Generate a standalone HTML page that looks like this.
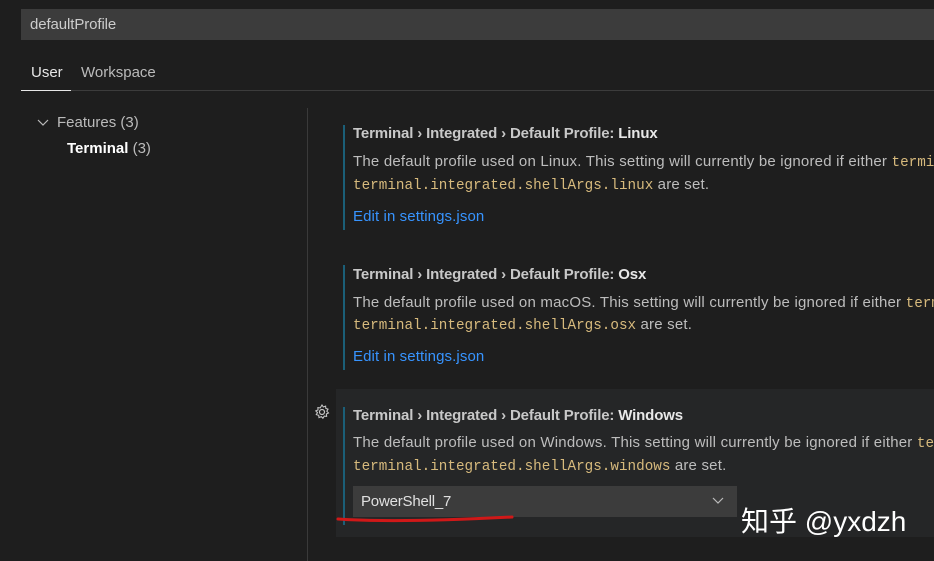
<!DOCTYPE html>
<html><head><meta charset="utf-8"><style>
*{margin:0;padding:0;box-sizing:border-box}
body{width:934px;height:561px;background:#1e1e1e;font-family:"Liberation Sans",sans-serif;color:#cccccc;position:relative;overflow:hidden}
.abs{position:absolute;white-space:nowrap}
.search{left:21px;top:9px;width:913px;height:31px;background:#3c3c3c;font-size:15px;color:#cccccc;padding:7px 9px;letter-spacing:-0.1px}
.tab{font-size:15px;top:64px;letter-spacing:0}
.item{position:absolute;left:336px;width:598px;overflow:hidden}
.bar{position:absolute;left:7px;width:2px;background:#1b5f78}
.t{position:absolute;left:17px;font-size:15px;font-weight:bold;color:#c8c8c8;letter-spacing:-0.15px;white-space:nowrap}
.t b{color:#e8e8e8}
.d{position:absolute;left:17px;font-size:15px;color:#bdbdbd;letter-spacing:0.2px;white-space:nowrap}
.m{font-family:"Liberation Mono",monospace;font-size:14.3px;color:#d7ba7d;letter-spacing:0}
.l{position:absolute;left:17px;font-size:15px;color:#3794ff;letter-spacing:0.1px}
</style></head><body>
<div class="abs search">defaultProfile</div>
<div class="abs tab" style="left:31px;color:#e7e7e7">User</div>
<div class="abs tab" style="left:81px;color:#bbbbbb">Workspace</div>
<div class="abs" style="left:21px;top:90px;width:50px;height:1px;background:#e7e7e7"></div>
<div class="abs" style="left:71px;top:90px;width:863px;height:1px;background:#3c3c3c"></div>
<svg class="abs" style="left:37px;top:118px" width="12" height="10"><path d="M1 2 L6 7 L11 2" stroke="#bbb" stroke-width="1.2" fill="none"/></svg>
<div class="abs" style="left:57px;top:114px;font-size:15px;color:#bbbbbb;letter-spacing:0">Features (3)</div>
<div class="abs" style="left:67px;top:140px;font-size:15px;color:#bbbbbb;letter-spacing:0"><b style="color:#ffffff">Terminal</b> (3)</div>
<div class="abs" style="left:307px;top:108px;width:1px;height:453px;background:#3a3a3a"></div>

<div class="item" style="top:118px;height:120px">
 <div class="bar" style="top:7px;height:105px"></div>
 <div class="t" style="top:7px">Terminal › Integrated › Default Profile: <b>Linux</b></div>
 <div class="d" style="top:35px">The default profile used on Linux. This setting will currently be ignored if either <span class="m">terminal.integrated.shell.linux</span></div>
 <div class="d" style="top:58px"><span class="m">terminal.integrated.shellArgs.linux</span> are set.</div>
 <div class="l" style="top:90px">Edit in settings.json</div>
</div>
<div class="item" style="top:258px;height:120px">
 <div class="bar" style="top:7px;height:105px"></div>
 <div class="t" style="top:8px">Terminal › Integrated › Default Profile: <b>Osx</b></div>
 <div class="d" style="top:36px">The default profile used on macOS. This setting will currently be ignored if either <span class="m">terminal.integrated.shell.osx</span></div>
 <div class="d" style="top:58px"><span class="m">terminal.integrated.shellArgs.osx</span> are set.</div>
 <div class="l" style="top:90px">Edit in settings.json</div>
</div>
<div class="item" style="top:389px;height:148px;background:#252627">
 <div class="bar" style="top:18px;height:118px"></div>
 <div class="t" style="top:18px">Terminal › Integrated › Default Profile: <b>Windows</b></div>
 <div class="d" style="top:45px">The default profile used on Windows. This setting will currently be ignored if either <span class="m">terminal.integrated.shell.windows</span></div>
 <div class="d" style="top:68px"><span class="m">terminal.integrated.shellArgs.windows</span> are set.</div>
 <div style="position:absolute;left:17px;top:97px;width:384px;height:31px;background:#3c3c3c"></div>
 <div style="position:absolute;left:25px;top:104px;font-size:15px;color:#e0e0e0;letter-spacing:-0.2px">PowerShell_7</div>
 <svg style="position:absolute;left:376px;top:108px" width="12" height="8"><path d="M1 1 L6 6 L11 1" stroke="#bbb" stroke-width="1.2" fill="none"/></svg>
</div>
<svg class="abs" style="left:313px;top:403px" width="18" height="18" viewBox="0 0 18 18"><circle cx="9" cy="9" r="2.5" stroke="#c5c5c5" stroke-width="1.2" fill="none"/><path d="M9 2 L10.3 4 L12.6 3.1 L12.8 5.4 L15 6.2 L13.8 8.2 L15.5 10 L13.4 11 L13.6 13.4 L11.3 13.1 L9.9 15.2 L8.3 13.6 L6 14.6 L5.7 12.3 L3.3 11.6 L4.5 9.6 L2.8 7.9 L5 6.9 L4.9 4.6 L7.2 4.9 Z" stroke="#c5c5c5" stroke-width="1.1" fill="none"/></svg>
<svg class="abs" style="left:336px;top:513px" width="180" height="12"><path d="M2 6 Q60 10 176 4" stroke="#d01818" stroke-width="3" fill="none" stroke-linecap="round"/></svg>
<div class="abs" style="left:741px;top:500px;font-size:28px;color:#ffffff;font-family:'Liberation Sans','Noto Sans CJK SC',sans-serif;letter-spacing:0px">知乎 @yxdzh</div>
</body></html>
